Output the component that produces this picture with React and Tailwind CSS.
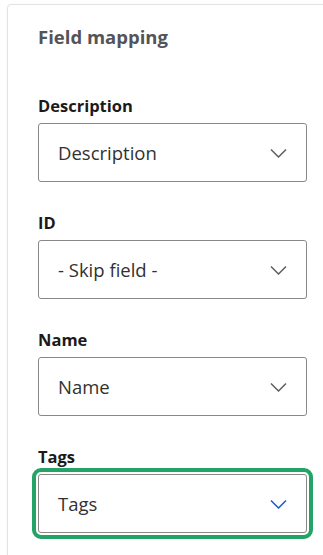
const fields = [
  { label: "Description", value: "Description" },
  { label: "ID", value: "- Skip field -" },
  { label: "Name", value: "Name" },
  { label: "Tags", value: "Tags", focused: true },
];

const Chevron = ({ className }) => (
  <svg width="17" height="10" viewBox="0 0 17 10" fill="none" className={className}>
    <path d="M1 1.5l7.5 7.5 7.5-7.5" stroke="currentColor" strokeWidth="1.5" />
  </svg>
);

const App = () => {
  return (
    <div className="w-[323px] h-[555px] overflow-hidden bg-white font-['Open_Sans',sans-serif]">
      <div className="ml-[7px] mt-[4px] w-[340px] h-[600px] border border-[#e3e3e6] rounded-tl-[4px] pl-[30px] pt-[19px] shadow-[0_0_2px_rgba(0,0,0,0.06)]">
        <h2 className="text-[18.5px] leading-[26px] font-bold text-[#545458]">Field mapping</h2>

        <div className="mt-[45px]">
          {fields.map((f) => (
            <div key={f.label} className="mb-[30px]">
              <div className="text-[16.5px] leading-[22px] font-bold text-[#1b1a19]">{f.label}</div>
              <div
                className={
                  "mt-[6px] w-[269px] h-[59px] border border-[#8a8886] rounded-[3px] flex items-center justify-between pl-[19px] pr-[19px] " +
                  (f.focused ? "outline-[4px] outline-solid outline-[#24a366] outline-offset-[2px]" : "")
                }
              >
                <span className="text-[18.5px] text-[#323130]">{f.value}</span>
                <Chevron className={f.focused ? "text-[#1a56d6]" : "text-[#605e5c]"} />
              </div>
            </div>
          ))}
        </div>
      </div>
    </div>
  );
};

export default App;
